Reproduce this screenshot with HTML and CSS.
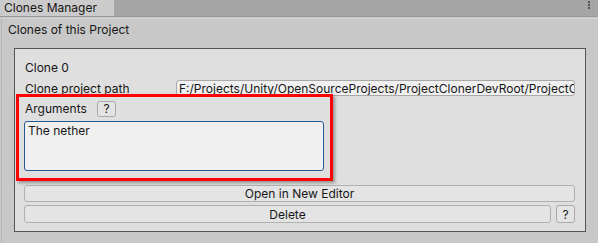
FILE: index.html
```html
<!DOCTYPE html>
<html lang="en">
<head>
  <meta charset="UTF-8">
  <title>Clones Manager</title>
  <link rel="stylesheet" href="styles.css">
</head>
<body>
  <div class="tabbar">
    <div class="tab">Clones Manager</div>
    <div class="tab-menu"><span></span><span></span><span></span></div>
  </div>

  <div class="panel">
    <div class="panel-title">Clones of this Project</div>

    <div class="clone-box">
      <div class="row label-row">Clone 0</div>
      <div class="row field-row">
        <span class="field-label">Clone project path</span>
        <div class="text-field">F:/Projects/Unity/OpenSourceProjects/ProjectClonerDevRoot/ProjectClonerDevRoot_clone_0</div>
      </div>
      <div class="row args-row">
        <span class="args-label">Arguments</span>
        <button class="help-btn">?</button>
      </div>
      <div class="text-area">The nether</div>

      <div class="buttons">
        <button class="btn">Open in New Editor</button>
        <div class="btn-line">
          <button class="btn">Delete</button>
          <button class="help-btn small">?</button>
        </div>
      </div>
    </div>
  </div>

  <!-- annotation frame drawn over the arguments block -->
  <div class="highlight"></div>
</body>
</html>
```

FILE: styles.css
```css
body {
  margin: 0;
  width: 598px;
  height: 243px;
  overflow: hidden;
  background-color: #c8c8c8;
  font-family: Inter, "Noto Sans", Arial, sans-serif;
  font-size: 12px;
  color: #161616;
  position: relative;
}

button {
  font-family: inherit;
  font-size: 12px;
  color: #161616;
  margin: 0;
  padding: 0;
}

.tabbar {
  height: 16px;
  background-color: #a5a5a5;
  border-bottom: 1px solid #999;
  display: flex;
  justify-content: space-between;
}

.tab {
  width: 110px;
  background-color: #cbcbcb;
  padding-left: 4px;
  line-height: 15px;
}

.tab-menu {
  display: flex;
  flex-direction: column;
  gap: 1px;
  padding: 1px 8px 0 0;
}

.tab-menu span {
  width: 2px;
  height: 2px;
  background-color: #505050;
}

.panel {
  margin: 1px 1px 0 1px;
  height: 225px;
  background-color: #c8c8c8;
  border-left: 1px solid #b5b5b5;
  border-top: 1px solid #d2d2d2;
  border-top-left-radius: 3px;
}

.panel-title {
  padding: 3px 0 0 6px;
  height: 26px;
  line-height: 16px;
}

.clone-box {
  margin-left: 12px;
  background-color: #dfdfdf;
  border: 1px solid #555;
  padding: 10px 10px 0 9px;
  box-sizing: border-box;
  height: 184px;
  width: 572px;
  display: flex;
  flex-direction: column;
}

.row {
  display: flex;
  align-items: center;
}

.label-row {
  height: 17px;
  padding-left: 1px;
}

.field-row {
  height: 18px;
  margin-top: 3px;
}

.field-label {
  width: 151px;
  padding-left: 1px;
}

.text-field {
  flex: 1;
  height: 16px;
  line-height: 15px;
  box-sizing: border-box;
  background-color: #f0f0f0;
  border: 1px solid #a8a8a8;
  border-radius: 3px;
  padding-left: 2px;
  white-space: nowrap;
  overflow: hidden;
}

.args-row {
  height: 17px;
  margin-top: 3px;
}

.args-label {
  width: 72px;
  padding-left: 1px;
}

.help-btn {
  width: 19px;
  height: 16px;
  background-color: #e4e4e4;
  border: 1px solid #a9a9a9;
  border-radius: 3px;
  line-height: 13px;
}

.help-btn.small {
  height: 18px;
}

.text-area {
  margin-top: 4px;
  width: 300px;
  height: 50px;
  box-sizing: border-box;
  background-color: #f0f0f0;
  border: 1px solid #1f5b95;
  border-radius: 3px;
  padding: 1px 3px;
  line-height: 15px;
}

.buttons {
  margin-top: 14px;
  display: flex;
  flex-direction: column;
  gap: 3px;
}

.btn-line {
  display: flex;
  gap: 5px;
}

.btn {
  height: 18px;
  flex: 1;
  width: 100%;
  background-color: #e4e4e4;
  border: 1px solid #b0b0b0;
  border-radius: 3px;
  line-height: 15px;
}

.highlight {
  position: absolute;
  left: 16px;
  top: 94px;
  width: 311px;
  height: 81px;
  border: 3px solid #ff0000;
  box-shadow: 2px 2px 3px rgba(0, 0, 0, 0.35);
}
```
